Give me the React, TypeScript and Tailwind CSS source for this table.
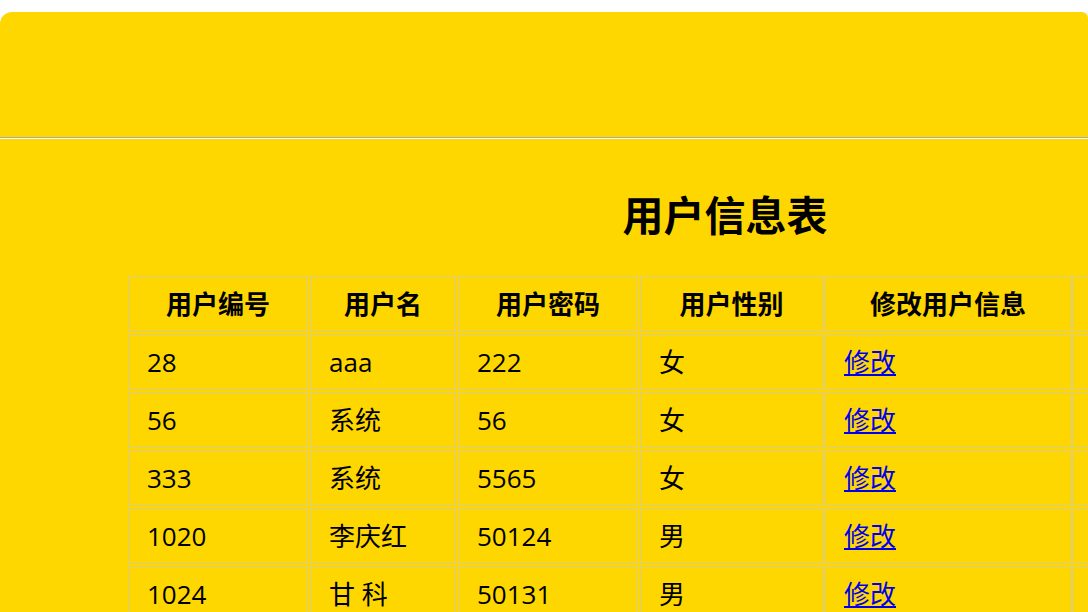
import React from "react";

const rows = [
  ["28", "aaa", "222", "女"],
  ["56", "系统", "56", "女"],
  ["333", "系统", "5565", "女"],
  ["1020", "李庆红", "50124", "男"],
  ["1024", "甘 科", "50131", "男"],
  ["1025", "张三", "50132", "男"],
];

const font = { fontFamily: '"Open Sans", "Noto Sans CJK SC", sans-serif' };

export default function App() {
  return (
    <div className="h-[612px] w-[1088px] overflow-hidden bg-white pt-[12px]" style={font}>
      <div className="min-h-[700px] w-full rounded-tl-xl rounded-tr-md bg-[#FFD700]">
        <div className="h-[125px]" />
        <div className="h-px bg-[#a8a8a8]" />
        <div className="h-px bg-white" />
        <div className="pt-[46px] pl-[126px]">
          <table className="w-[1198px] table-fixed border-separate border-spacing-[2px] text-black">
            <caption className="pb-[29px] text-[41px] font-bold leading-[60px]">用户信息表</caption>
            <thead>
              <tr>
                <th className="h-[56px] w-[180px] border border-[#d9cb8c] text-[26px] font-bold">用户编号</th>
                <th className="h-[56px] w-[146px] border border-[#d9cb8c] text-[26px] font-bold">用户名</th>
                <th className="h-[56px] w-[180px] border border-[#d9cb8c] text-[26px] font-bold">用户密码</th>
                <th className="h-[56px] w-[183px] border border-[#d9cb8c] text-[26px] font-bold">用户性别</th>
                <th className="h-[56px] w-[246px] border border-[#d9cb8c] text-[26px] font-bold">修改用户信息</th>
                <th className="h-[56px] w-[249px] border border-[#d9cb8c]" />
              </tr>
            </thead>
            <tbody>
              {rows.map((r, i) => (
                <tr key={i}>
                  {r.map((c, j) => (
                    <td key={j} className="h-[56px] border border-[#d9cb8c] pl-[18px] text-[26px]">
                      {c}
                    </td>
                  ))}
                  <td className="h-[56px] border border-[#d9cb8c] pl-[18px] text-[26px]">
                    <a href="#" className="text-[#0000EE] underline">修改</a>
                  </td>
                  <td className="h-[56px] border border-[#d9cb8c]" />
                </tr>
              ))}
            </tbody>
          </table>
        </div>
      </div>
    </div>
  );
}
